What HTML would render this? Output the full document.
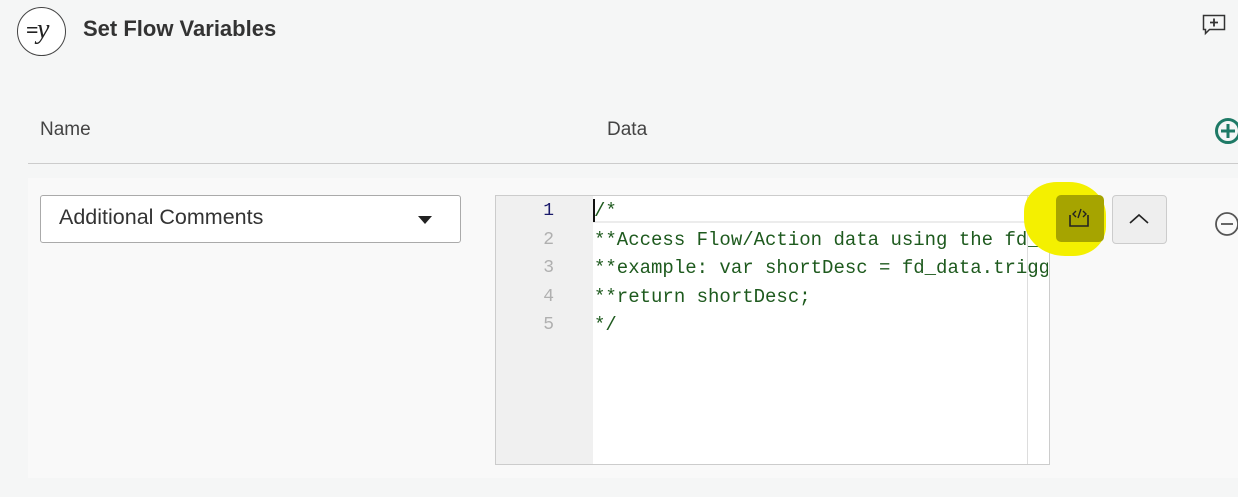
<!DOCTYPE html>
<html><head><style>
body{margin:0;width:1238px;height:497px;background:#f5f6f6;font-family:"Liberation Sans",sans-serif;position:relative;overflow:hidden}
.a{position:absolute}
.code{font-family:"Liberation Mono",monospace;font-size:19px;color:#1e5a1e;line-height:28.5px}
.ln{font-family:"Liberation Mono",monospace;font-size:18px;color:#b0b0b0;width:62px;text-align:right}
</style></head><body>
<div class="a" style="left:17px;top:7px;width:47px;height:47px;border:1px solid #444;border-radius:50%;background:#fff"></div>
<div class="a" style="left:26px;top:17px;font-family:'Liberation Serif',serif;font-size:22px;font-weight:bold;color:#222">=</div>
<div class="a" style="left:37px;top:14px;font-family:'Liberation Serif',serif;font-style:italic;font-size:28px;color:#222">y</div>
<div class="a" style="left:83px;top:16px;font-size:22px;font-weight:bold;color:#333">Set Flow Variables</div>
<svg class="a" style="left:1202px;top:14px" width="25" height="22" viewBox="0 0 25 22"><path d="M1.5 1.5h21v14h-15l-4 4v-4h-2z" fill="none" stroke="#333" stroke-width="1.5"/><path d="M12 4.5v8M8 8.5h8" stroke="#333" stroke-width="1.8"/></svg>
<div class="a" style="left:40px;top:119px;font-size:19px;color:#444">Name</div>
<div class="a" style="left:607px;top:119px;font-size:19px;color:#444">Data</div>
<svg class="a" style="left:1213px;top:115px" width="30" height="32"><circle cx="15" cy="16" r="11.5" fill="none" stroke="#1e7a66" stroke-width="3"/><path d="M15 9v14M8 16h14" stroke="#1e7a66" stroke-width="3"/></svg>
<div class="a" style="left:28px;top:163px;width:1210px;height:1px;background:#ccc"></div>
<div class="a" style="left:28px;top:178px;width:1210px;height:300px;background:#f9f9f9"></div>
<div class="a" style="left:40px;top:195px;width:419px;height:46px;border:1px solid #aaa;border-radius:3px;background:#fff"></div>
<div class="a" style="left:59px;top:205px;font-size:21.5px;color:#333">Additional Comments</div>
<div class="a" style="left:418px;top:216px;width:0;height:0;border-left:7px solid transparent;border-right:7px solid transparent;border-top:8px solid #222"></div>
<div class="a" style="left:495px;top:195px;width:553px;height:268px;border:1px solid #ccc;background:#fff"></div>
<div class="a" style="left:496px;top:196px;width:97px;height:268px;background:#f0f0f0"></div>
<div class="a" style="left:593px;top:196px;width:435px;height:25px;border-bottom:2px solid #ececec"></div>
<div class="a" style="left:593px;top:199px;width:2px;height:23px;background:#111"></div>
<div class="a ln" style="left:492px;top:201px;color:#1a1a6a">1</div>
<div class="a ln" style="left:492px;top:230px">2</div>
<div class="a ln" style="left:492px;top:258px">3</div>
<div class="a ln" style="left:492px;top:287px">4</div>
<div class="a ln" style="left:492px;top:315px">5</div>
<div class="a code" style="left:594px;top:197px;width:454px;overflow:hidden;white-space:pre">/*
**Access Flow/Action data using the fd_data
**example: var shortDesc = fd_data.trigger
**return shortDesc;
*/</div>
<div class="a" style="left:1027px;top:196px;width:1px;height:268px;background:#ddd"></div>
<div class="a" style="left:1024px;top:182px;width:82px;height:74px;background:#f4f000;border-radius:40% 45% 40% 50%"></div>
<div class="a" style="left:1056px;top:195px;width:48px;height:47px;background:#a6a400;border-radius:5px"></div>
<svg class="a" style="left:1068px;top:208px" width="24" height="20"><path d="M2 7v11h18V7" fill="none" stroke="#222" stroke-width="1.6"/><path d="M8 3l-3 3 3 3M15 3l3 3-3 3M13 1l-3 9" fill="none" stroke="#222" stroke-width="1.4"/></svg>
<div class="a" style="left:1112px;top:195px;width:53px;height:47px;border:1px solid #ccc;border-radius:4px;background:#eee"></div>
<svg class="a" style="left:1128px;top:212px" width="22" height="14"><path d="M2 11l9-8 9 8" fill="none" stroke="#222" stroke-width="1.6"/></svg>
<svg class="a" style="left:1214px;top:211px" width="26" height="26"><circle cx="13" cy="13" r="11" fill="none" stroke="#555" stroke-width="1.8"/><path d="M7 13h12" stroke="#555" stroke-width="1.8"/></svg>
</body></html>
